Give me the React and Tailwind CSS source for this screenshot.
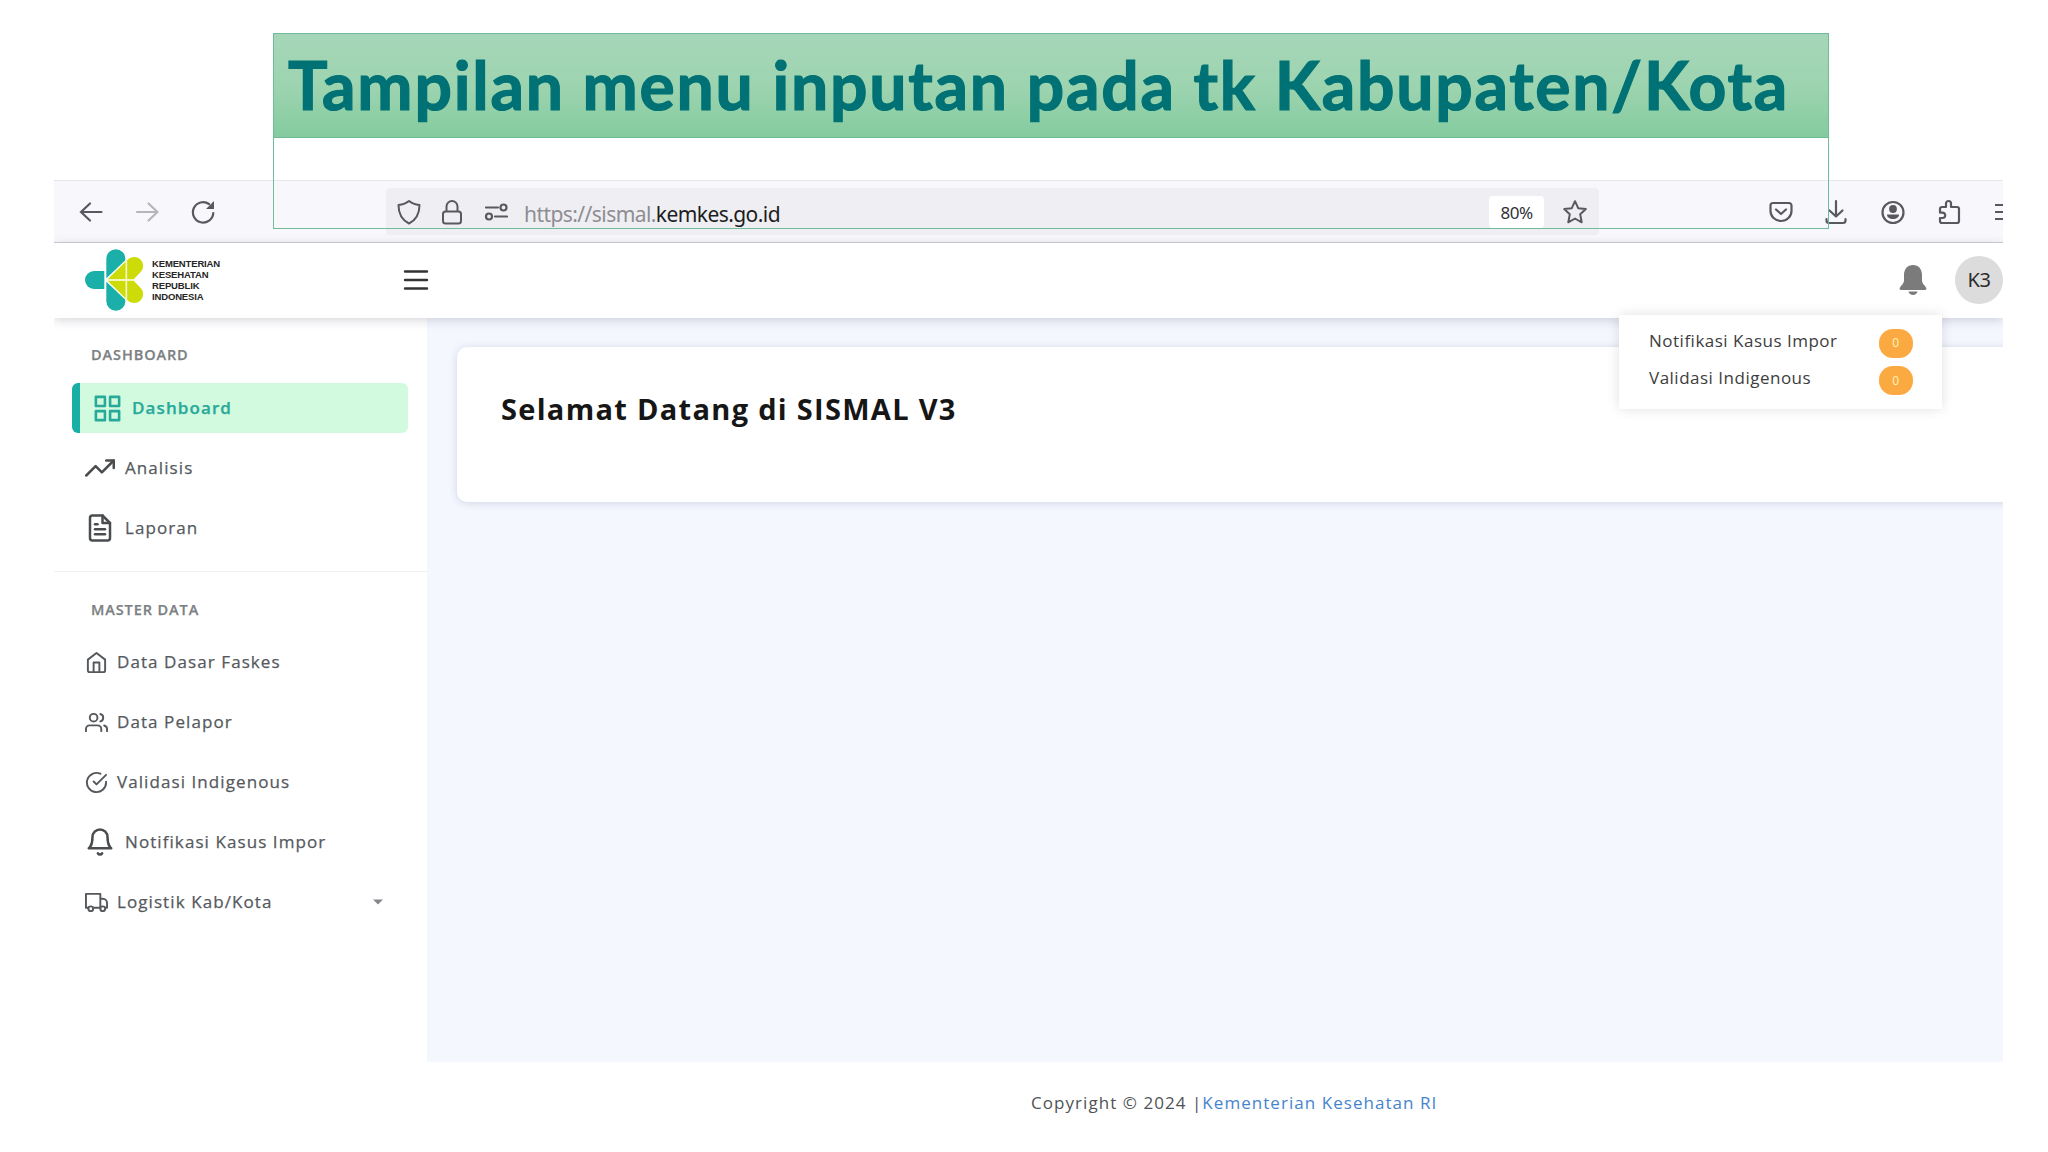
import React from 'react';
import {
  FiBell,
  FiCheckCircle,
  FiFileText,
  FiGrid,
  FiHome,
  FiTrendingUp,
  FiUsers,
} from 'react-icons/fi';

const masterMenu = [
  { label: 'Data Dasar Faskes', icon: FiHome },
  { label: 'Data Pelapor', icon: FiUsers },
  { label: 'Validasi Indigenous', icon: FiCheckCircle },
  { label: 'Notifikasi Kasus Impor', icon: FiBell, big: true },
  { label: 'Logistik Kab/Kota', icon: TruckIcon, caret: true },
];

const notifications = [
  { label: 'Notifikasi Kasus Impor', count: 0 },
  { label: 'Validasi Indigenous', count: 0 },
];

function TruckIcon({ className }) {
  return (
    <svg className={className} viewBox="0 0 24 24" fill="none" stroke="currentColor" strokeWidth="2" strokeLinecap="round" strokeLinejoin="round">
      <path d="M3.500 17.500H1V3h15v14.500H8.500M16 8h2.500A4.500 4.500 0 0 1 23 12.500v5h-1.500" />
      <circle cx="6" cy="18.500" r="2.500" />
      <circle cx="18.500" cy="18.500" r="2.500" />
    </svg>
  );
}

function Logo() {
  return (
    <svg className="h-[62px] w-[58px]" viewBox="0 0 174 186">
      <g fill="#1aafa8">
        <path d="M64 29.500A28.500 28.500 0 0 1 121 29.500V34L64 88Z" />
        <path d="M58 66H27A27 27 0 0 0 27 120H58Z" />
        <path d="M64 156.500A28.500 28.500 0 0 0 121 156.500V152L64 98Z" />
      </g>
      <g fill="#cddc09">
        <path d="M68 91L126 34A27 27 0 1 1 165 71L146 91Z" />
        <path d="M68 95L126 152A27 27 0 1 0 165 115L146 95Z" />
      </g>
      <path d="M124 30V156M68 93H150" stroke="#f4f8c4" strokeWidth="5" />
    </svg>
  );
}

function BrowserBar() {
  return (
    <div className="flex h-[63px] items-center border-y border-t-[#e6e6ea] border-b-[#cfcfd2] bg-[#f8f8fc] text-[#58585e]">
      <svg className="ml-[25px] h-6 w-6" viewBox="0 0 24 24" fill="none" stroke="currentColor" strokeWidth="2.200" strokeLinecap="round">
        <path d="M22.500 12H2M11 3.500L2 12l9 8.500" />
      </svg>
      <svg className="ml-8 h-6 w-6 text-[#b5b5ba]" viewBox="0 0 24 24" fill="none" stroke="currentColor" strokeWidth="2.200" strokeLinecap="round">
        <path d="M2 12h20.500M13.500 3.500l9 8.500-9 8.500" />
      </svg>
      <svg className="ml-8 h-6 w-6" viewBox="0 0 24 24" fill="none" stroke="currentColor" strokeWidth="2.200" strokeLinecap="round">
        <path d="M22.300 13A10.200 10.200 0 1 1 18 4" />
        <path d="M23 1v8h-8Z" fill="currentColor" stroke="none" />
      </svg>

      <div className="ml-[171px] flex h-[47px] w-[1213px] items-center rounded bg-[#efeff3]">
        <svg className="ml-[10px] h-[26px] w-[26px]" viewBox="0 0 26 26" fill="none" stroke="currentColor" strokeWidth="2" strokeLinejoin="round">
          <path d="M13 2C10 4.500 6.500 5.500 2.500 6c0 8 2.500 14.500 10.500 18.500C21 20.500 23.500 14 23.500 6 19.500 5.500 16 4.500 13 2Z" />
        </svg>
        <svg className="ml-[17px] h-[26px] w-[26px]" viewBox="0 0 26 26" fill="none" stroke="currentColor" strokeWidth="2">
          <rect x="4" y="12.500" width="18" height="12" rx="2.500" />
          <path d="M7.500 12.500V7.500a5.500 5.500 0 0 1 11 0v5" />
        </svg>
        <svg className="ml-[19px] h-6 w-6" viewBox="0 0 24 24" fill="none" stroke="currentColor" strokeWidth="2.200" strokeLinecap="round">
          <path d="M2 7.500h12M11 16.500h12" />
          <circle cx="19.500" cy="7.500" r="3" />
          <circle cx="5" cy="16.500" r="3" />
        </svg>
        <span className="ml-4 w-[965px] pt-[5px] font-['Noto_Sans',sans-serif] text-[21px] leading-none tracking-[-0.57px] text-[#8d8d92]">
          https://sismal.<span className="text-[#1d1d22]">kemkes.go.id</span>
        </span>
        <span className="flex h-8 w-[55px] items-center justify-center rounded bg-white pt-[2px] font-['Noto_Sans',sans-serif] text-[17px] tracking-[-0.5px] text-[#303035]">
          80%
        </span>
        <svg className="ml-[18px] h-[26px] w-[26px]" viewBox="0 0 26 26" fill="none" stroke="currentColor" strokeWidth="2" strokeLinejoin="round">
          <path d="M13 2.200l3.200 7 7.600.9-5.600 5.200 1.500 8L13 19.500l-6.700 3.800 1.500-8L2.200 10.100l7.600-.9Z" />
        </svg>
      </div>

      <svg className="ml-[169px] h-[26px] w-[26px]" viewBox="0 0 26 26" fill="none" stroke="currentColor" strokeWidth="2.200" strokeLinecap="round" strokeLinejoin="round">
        <path d="M5 4h16a2.500 2.500 0 0 1 2.500 2.500V12a10.500 10 0 0 1-21 0V6.500A2.500 2.500 0 0 1 5 4Z" />
        <path d="M8 10.500l5 4.500 5-4.500" />
      </svg>
      <svg className="ml-[29px] h-[26px] w-[26px]" viewBox="0 0 26 26" fill="none" stroke="currentColor" strokeWidth="2.200" strokeLinecap="round" strokeLinejoin="round">
        <path d="M13 2v15.500M6.500 11.500L13 17.500l6.500-6M3.500 20v1.500A2.500 2.500 0 0 0 6 24h14a2.500 2.500 0 0 0 2.500-2.500V20" />
      </svg>
      <svg className="ml-[31px] h-[26px] w-[26px]" viewBox="0 0 26 26">
        <circle cx="13" cy="13.500" r="10.500" fill="none" stroke="currentColor" strokeWidth="2.200" />
        <circle cx="13" cy="10" r="3.900" fill="currentColor" />
        <path d="M7 15.500h12c0 2.800-2.500 4.500-6 4.500s-6-1.700-6-4.500Z" fill="currentColor" />
      </svg>
      <svg className="ml-[30px] h-[26px] w-[26px]" viewBox="0 0 26 26" fill="none" stroke="currentColor" strokeWidth="2.200" strokeLinejoin="round">
        <path d="M10 8V4.500a2.500 2.500 0 0 1 5 0V8h6a2 2 0 0 1 2 2v12a2 2 0 0 1-2 2H6a2 2 0 0 1-2-2v-3h2.500a2.700 2.700 0 0 0 0-5.400H4V10a2 2 0 0 1 2-2Z" />
      </svg>
      <svg className="ml-[31px] h-6 w-[10px]" viewBox="0 0 10 24" stroke="currentColor" strokeWidth="2">
        <path d="M2 5h8M2 12h8M2 19h8" />
      </svg>
    </div>
  );
}

function Header() {
  return (
    <header className="relative z-10 flex h-[75px] items-center bg-white pb-px shadow-[0_2px_10px_rgba(60,60,90,0.22)]">
      <div className="ml-[31px]">
        <Logo />
      </div>
      <div className="ml-[9px] w-[74px] font-['Liberation_Sans',sans-serif] text-[9.500px] leading-[11.200px] font-bold tracking-[-0.15px] whitespace-nowrap text-[#262626]">
        KEMENTERIAN
        <br />
        KESEHATAN
        <br />
        REPUBLIK
        <br />
        INDONESIA
      </div>
      <svg className="ml-[177px] h-6 w-[26px]" viewBox="0 0 26 24" stroke="#333" strokeWidth="2.400" strokeLinecap="round">
        <path d="M2 3.500h22M2 12h22M2 20.500h22" />
      </svg>

      <svg className="ml-auto h-8 w-7 text-[#7b7b7b]" viewBox="0 0 28 32" fill="currentColor">
        <path d="M14 1C8.500 1 5 5 5 11v5.500c0 3-3.500 5.500-4.300 7.500-.4 1.200.3 2 1.300 2h24c1 0 1.700-.8 1.300-2-.8-2-4.300-4.500-4.300-7.500V11c0-6-3.500-10-9-10Z" />
        <path d="M9.500 27.500h9c-.5 2-2.300 3.500-4.500 3.500s-4-1.500-4.500-3.500Z" />
      </svg>
      <div className="ml-7 w-12 overflow-hidden">
        <div className="flex h-12 w-12 items-center justify-center rounded-full bg-[#dcdcdc] font-['Noto_Sans',sans-serif] text-[20px] tracking-[-0.5px] text-[#2c2c2c]">
          K3
        </div>
      </div>

      <div className="absolute top-[72px] right-[61px] h-[94px] w-[323px] bg-white pt-[8px] pr-[29px] pl-[30px] shadow-[0_0_12px_rgba(0,0,0,0.12)]">
        {notifications.map((item) => (
          <div key={item.label} className="flex h-[37.500px] items-center justify-between text-[17px] tracking-[0.5px] text-[#3d3d3d]">
            <span className="-mt-[3px]">{item.label}</span>
            <span className="mt-[3px] flex h-[29px] w-[34px] items-center justify-center rounded-[14px] bg-[#fbaa41] text-[12px] text-[#fff3b8]">
              {item.count}
            </span>
          </div>
        ))}
      </div>
    </header>
  );
}

function MenuItem({ label, icon: Icon, big, caret }) {
  return (
    <li className="flex h-[50px] items-center pl-[31px]">
      <Icon className={big ? 'h-[30px] w-[30px] text-[#4a4d50]' : 'h-[23px] w-[23px] text-[#55585c]'} />
      <span className={big ? 'ml-[10px]' : 'ml-[9px]'}>{label}</span>
      {caret && (
        <svg className="mr-[44px] ml-auto h-[6px] w-[10px]" viewBox="0 0 10 6">
          <path d="M0 0.500h10L5 5.500Z" fill="#83868a" />
        </svg>
      )}
    </li>
  );
}

function Sidebar() {
  return (
    <aside className="h-[744px] w-[373px] shrink-0 bg-white text-[17px] font-medium tracking-[1.080px] text-[#55595e] [-webkit-text-stroke:0.25px_currentColor]">
      <div className="h-[254px] border-b border-[#f0f0f1] pt-[27px]">
        <p className="pl-[37px] text-[14.500px] leading-5 font-semibold tracking-[0.9px] text-[#7c7f83]">DASHBOARD</p>
        <ul className="mt-[18px] flex flex-col gap-[10px]">
          <li className="mr-[19px] ml-[18px] flex h-[50px] items-center rounded-md border-l-8 border-[#1aafa4] bg-[#d1fadf] pl-[12px] font-semibold text-[#28a99a]">
            <FiGrid className="h-[31px] w-[31px]" />
            <span className="ml-[9px] tracking-[1.100px]">Dashboard</span>
          </li>
          <MenuItem label="Analisis" icon={FiTrendingUp} big />
          <MenuItem label="Laporan" icon={FiFileText} big />
        </ul>
      </div>
      <p className="pt-[28px] pl-[37px] text-[14.500px] leading-5 font-semibold tracking-[0.9px] text-[#7c7f83]">MASTER DATA</p>
      <ul className="mt-[17px] flex flex-col gap-[10px]">
        {masterMenu.map((item) => (
          <MenuItem key={item.label} {...item} />
        ))}
      </ul>
    </aside>
  );
}

export default function App() {
  return (
    <div className="relative h-[1152px] w-[2048px] overflow-hidden bg-white pt-[33px] font-['Open_Sans',sans-serif]">
      <h1 className="ml-[273px] h-[105px] w-[1556px] border border-[#6fbb95] bg-linear-to-b from-[#a6d6b8] via-[#9dd4b0] to-[#84cb9f] pl-[14px] font-['Lato',sans-serif] text-[66px] leading-[101px] font-bold tracking-[1.780px] whitespace-nowrap text-[#007174] [-webkit-text-stroke:1.200px_#007174]">
        Tampilan menu inputan pada tk Kabupaten/Kota
      </h1>

      <div className="mt-[42px] ml-[54px] w-[1949px] overflow-hidden">
        <BrowserBar />
        <Header />
        <div className="flex">
          <Sidebar />
          <main className="flex-1 overflow-hidden bg-[#f4f7fe] pt-[29px] pl-[30px]">
            <section className="h-[155px] w-[1600px] rounded-[10px] bg-white pt-[42px] pl-[44px] shadow-[0_1px_8px_rgba(60,70,110,0.18)]">
              <h2 className="text-[29px] leading-[40px] font-bold tracking-[1.300px] text-[#161616]">
                Selamat Datang di SISMAL V3
              </h2>
            </section>
          </main>
        </div>
        <footer className="pt-[27px] pl-[977px] text-[17px] leading-7 tracking-[1.050px] text-[#505356]">
          Copyright © 2024 |<a className="text-[#4584cc]">Kementerian Kesehatan RI</a>
        </footer>
      </div>

      {/* frame of the title box, drawn over the browser bar */}
      <div className="pointer-events-none absolute top-[33px] left-[273px] z-20 h-[196px] w-[1556px] border border-[#6fbb9b]" />
    </div>
  );
}
